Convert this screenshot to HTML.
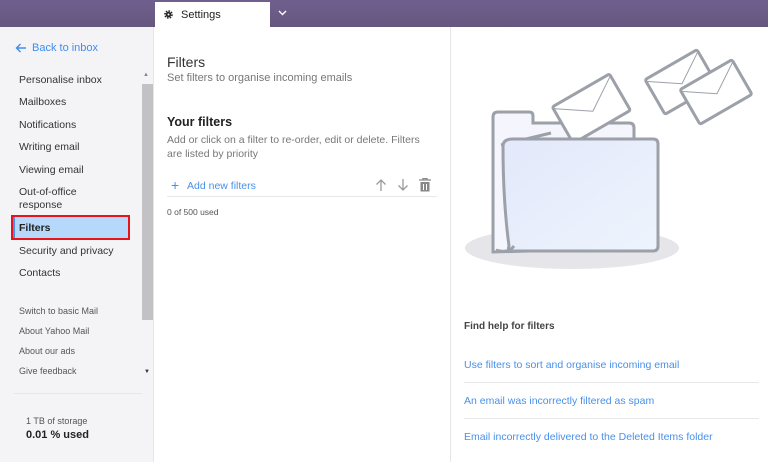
<!DOCTYPE html>
<html><head><style>
*{margin:0;padding:0;box-sizing:border-box}
body{width:768px;height:462px;overflow:hidden;font-family:"Liberation Sans",sans-serif;background:#fff;position:relative;color:#333}
.hdr{position:absolute;left:0;top:0;width:768px;height:27px;background:linear-gradient(#6f5f8e,#66577f)}
.tab{position:absolute;left:155px;top:2px;width:115px;height:25px;background:#fff;font-size:11px;color:#222;padding:7px 0 0 26px}
.side{position:absolute;left:0;top:27px;width:153px;height:435px;background:#f4f4f7}
.t{position:absolute;font-size:10.5px;white-space:nowrap}
.nav{left:19px;color:#333}
.sm{left:19px;font-size:9px;color:#555}
.scr{position:absolute;left:142px;top:84px;width:11px;height:236px;background:#c2c2c4}
.line{position:absolute;background:#e8e8ec;height:1px}
.link{color:#4a90e8;left:464px}
</style></head><body>
<div class="hdr"></div>
<div class="tab">Settings</div>
<svg style="position:absolute;left:163px;top:9px" width="11" height="11" viewBox="0 0 12 12"><circle cx="6" cy="6" r="3.6" fill="none" stroke="#222" stroke-width="2.2" stroke-dasharray="1.6 1.2"/><circle cx="6" cy="6" r="2.8" fill="#222"/><circle cx="6" cy="6" r="1.1" fill="#fff"/></svg>
<svg style="position:absolute;left:278px;top:10px" width="9" height="6" viewBox="0 0 9 6"><path d="M1 1l3.5 3.5L8 1" stroke="#fff" stroke-width="1.4" fill="none"/></svg>
<div class="side"></div>
<div class="scr"></div>
<div style="position:absolute;left:143px;top:72px;font-size:6px;color:#888">▲</div>
<div style="position:absolute;left:144px;top:369px;font-size:6px;color:#333">▼</div>
<svg style="position:absolute;left:15px;top:43px" width="12" height="10" viewBox="0 0 12 10"><path d="M11 5H1.5M5.5 1L1.5 5l4 4" stroke="#3d8ef0" stroke-width="1.4" fill="none"/></svg>
<div class="t" style="left:32px;top:42px;color:#3d8ef0;font-size:11px">Back to inbox</div>
<div class="t nav" style="top:74px">Personalise inbox</div>
<div class="t nav" style="top:96px">Mailboxes</div>
<div class="t nav" style="top:119px">Notifications</div>
<div class="t nav" style="top:141px">Writing email</div>
<div class="t nav" style="top:164px">Viewing email</div>
<div class="t nav" style="top:186px">Out-of-office</div>
<div class="t nav" style="top:199px">response</div>
<div style="position:absolute;left:11px;top:215px;width:119px;height:25px;border:2px solid #e8141c;background:#b6d8fb"></div>
<div style="position:absolute;left:13px;top:217px;width:2px;height:21px;background:#4a90e8"></div>
<div class="t nav" style="top:222px;font-weight:bold;color:#222">Filters</div>
<div class="t nav" style="top:245px">Security and privacy</div>
<div class="t nav" style="top:267px">Contacts</div>
<div class="t sm" style="top:306px">Switch to basic Mail</div>
<div class="t sm" style="top:326px">About Yahoo Mail</div>
<div class="t sm" style="top:346px">About our ads</div>
<div class="t sm" style="top:366px">Give feedback</div>
<div class="line" style="left:13px;top:393px;width:129px"></div>
<div class="t" style="left:26px;top:416px;font-size:9px;color:#555">1 TB of storage</div>
<div class="t" style="left:26px;top:429px;font-size:11px;font-weight:bold;color:#222">0.01 % used</div>
<div style="position:absolute;left:153px;top:27px;width:1px;height:435px;background:#e6e6ea"></div>
<div style="position:absolute;left:450px;top:27px;width:1px;height:435px;background:#e6e6ea"></div>
<div class="t" style="left:167px;top:54px;font-size:14px;color:#333">Filters</div>
<div class="t" style="left:167px;top:72px;font-size:11px;color:#777">Set filters to organise incoming emails</div>
<div class="t" style="left:167px;top:115px;font-size:12.5px;font-weight:bold;color:#222">Your filters</div>
<div class="t" style="left:167px;top:133px;font-size:10.5px;color:#777;line-height:14px">Add or click on a filter to re-order, edit or delete. Filters<br>are listed by priority</div>
<div class="t" style="left:171px;top:177px;font-size:14px;color:#4a90e8">+</div>
<div class="t" style="left:187px;top:180px;font-size:10.5px;color:#4a90e8">Add new filters</div>
<svg style="position:absolute;left:374px;top:178px" width="60" height="14" viewBox="0 0 60 14"><path d="M7 13V2M2.5 6.5L7 2l4.5 4.5" stroke="#9a9a9a" stroke-width="1.3" fill="none"/><path d="M29 1v11M24.5 7.5L29 12l4.5-4.5" stroke="#9a9a9a" stroke-width="1.3" fill="none"/><path d="M45 2h12M49 2V0.5h4V2" stroke="#888" stroke-width="1.3" fill="none"/><path d="M46.5 4h9v9.5h-9z" fill="#888"/><path d="M49.5 6v6M52.5 6v6" stroke="#fff" stroke-width="1"/></svg>
<div class="line" style="left:167px;top:196px;width:270px"></div>
<div class="t" style="left:167px;top:207px;font-size:8.5px;color:#555">0 of 500 used</div>
<svg style="position:absolute;left:451px;top:30px" width="317" height="260" viewBox="0 0 317 260">
<defs><linearGradient id="g" x1="0" y1="0" x2="1" y2="1"><stop offset="0" stop-color="#e3e8fb"/><stop offset="1" stop-color="#eef4fd"/></linearGradient></defs>
<ellipse cx="121" cy="218" rx="107" ry="21" fill="#e6e6ea"/>
<path d="M42 222V87q0-5 5-5h31q4 0 4 4v7h96q5 0 5 5v120z" fill="#f4f5fd" stroke="#9ca0a8" stroke-width="3"/>
<g transform="rotate(-30 140 80)"><rect x="108" y="58" width="66" height="42" rx="2" fill="#fff" stroke="#9ca0a8" stroke-width="3"/><path d="M108 60l33 22 33-22" stroke="#9ca0a8" stroke-width="1" fill="none"/></g>
<g transform="rotate(-30 230 52)"><rect x="200" y="32" width="60" height="40" rx="2" fill="#fff" stroke="#9ca0a8" stroke-width="3"/><path d="M200 34l30 20 30-20" stroke="#9ca0a8" stroke-width="1" fill="none"/></g>
<g transform="rotate(-30 265 62)"><rect x="235" y="42" width="60" height="40" rx="2" fill="#fff" stroke="#9ca0a8" stroke-width="3"/><path d="M235 44l30 20 30-20" stroke="#9ca0a8" stroke-width="1" fill="none"/></g>
<path d="M50 115l50-12M52 150l45-8" stroke="#9ca0a8" stroke-width="3" fill="none"/>
<path d="M62 109h140q5 0 5 5v102q0 5-5 5H62q-6 0-4-5c-4-30-6-60-6-100q0-7 10-7z" fill="url(#g)" stroke="#9ca0a8" stroke-width="3"/>
<path d="M45 220q12 4 18-4" stroke="#9ca0a8" stroke-width="3" fill="none"/>
</svg>
<div class="t" style="left:464px;top:321px;font-size:10px;color:#444;font-weight:bold">Find help for filters</div>
<div class="t link" style="top:359px">Use filters to sort and organise incoming email</div>
<div class="line" style="left:464px;top:382px;width:295px"></div>
<div class="t link" style="top:395px">An email was incorrectly filtered as spam</div>
<div class="line" style="left:464px;top:418px;width:295px"></div>
<div class="t link" style="top:431px">Email incorrectly delivered to the Deleted Items folder</div>
</body></html>
